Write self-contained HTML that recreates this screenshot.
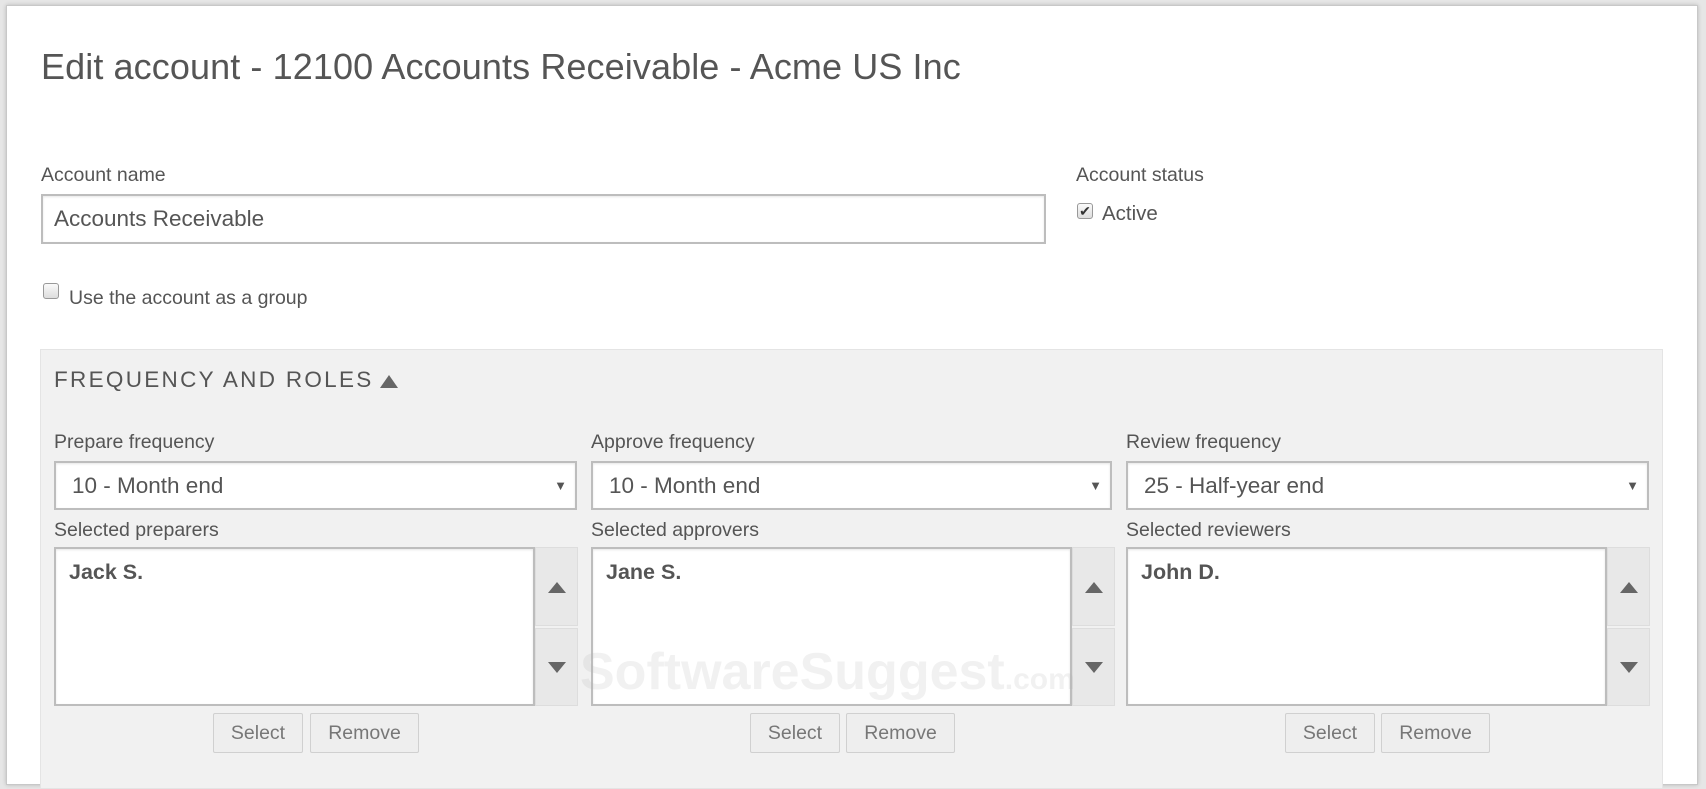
<!DOCTYPE html>
<html><head><meta charset="utf-8"><style>
*{box-sizing:border-box;margin:0;padding:0}
body{width:1706px;height:770px;overflow:hidden;background:#e6e6e6;font-family:"Liberation Sans",Arial,sans-serif;color:#555;position:relative}
.page{position:absolute;left:6px;top:5px;width:1692px;height:780px;background:#fff;border:1px solid #c8c8c8;box-shadow:0 0 4px rgba(0,0,0,.2)}
.a{position:absolute}
h1{position:absolute;left:41px;top:46px;font-size:36px;font-weight:normal;color:#555;letter-spacing:0.1px}
.lbl{font-size:19.5px;color:#555}
.inp{border:2px solid #bdbdbd;background:#fff;box-shadow:inset 0 1px 2px rgba(0,0,0,.1)}
.cb{width:16px;height:16px;border:1px solid #999;border-radius:3px;background:linear-gradient(#fafafa,#ddd)}
.panel{position:absolute;left:40px;top:349px;width:1623px;height:440px;background:#f1f1f1;border:1px solid #e4e4e4}
.sel{font-size:22.5px;color:#555;padding-left:16px;line-height:45px}
.arr{position:absolute;right:8px;top:0;font-size:13px;line-height:45px;color:#555}
.btn{position:absolute;top:0;height:40px;border:1px solid #d0d0d0;background:#eee;color:#777;font-size:19.5px;line-height:38px;text-align:center;border-radius:2px}
.tri-u{width:0;height:0;border-left:9px solid transparent;border-right:9px solid transparent;border-bottom:11px solid #666}
.tri-d{width:0;height:0;border-left:9px solid transparent;border-right:9px solid transparent;border-top:11px solid #666}
</style></head><body>
<div class="page"></div>
<h1>Edit account - 12100 Accounts Receivable - Acme US Inc</h1>
<div class="a lbl" style="left:41px;top:164px">Account name</div>
<div class="a inp" style="left:41px;top:194px;width:1005px;height:50px;font-size:22.5px;line-height:46px;padding-left:11px">Accounts Receivable</div>
<div class="a lbl" style="left:1076px;top:164px">Account status</div>
<div class="a cb" style="left:1077px;top:203px;font-size:14px;line-height:14px;text-align:center;color:#333">✔</div>
<div class="a lbl" style="left:1102px;top:202px;font-size:20.5px">Active</div>
<div class="a cb" style="left:43px;top:283px"></div>
<div class="a lbl" style="left:69px;top:287px">Use the account as a group</div>
<div class="panel"></div>
<div class="a" style="left:54px;top:367px;font-size:22.5px;letter-spacing:2.3px;color:#555">FREQUENCY AND ROLES</div>
<div class="a tri-u" style="left:380px;top:375px;border-bottom-width:13px"></div>

<div class="a" style="left:54px;top:0">
 <div class="a lbl" style="left:0;top:431px;white-space:nowrap">Prepare frequency</div>
 <div class="a inp sel" style="left:0;top:461px;width:523px;height:49px">10 - Month end<span class="arr">▼</span></div>
 <div class="a lbl" style="left:0;top:519px;white-space:nowrap">Selected preparers</div>
 <div class="a inp" style="left:0;top:547px;width:481px;height:159px;font-weight:bold;font-size:21.5px;padding:11px 0 0 13px">Jack S.</div>
 <div class="a" style="left:481px;top:547px;width:43px;height:79px;background:#e8e8e8;border:1px solid #ddd"><div class="tri-u" style="margin:34px auto 0"></div></div>
 <div class="a" style="left:481px;top:628px;width:43px;height:78px;background:#e8e8e8;border:1px solid #ddd"><div class="tri-d" style="margin:33px auto 0"></div></div>
 <div class="a" style="left:0;top:713px"><div class="btn" style="left:159px;width:90px">Select</div><div class="btn" style="left:256px;width:109px">Remove</div></div>
</div>

<div class="a" style="left:591px;top:0">
 <div class="a lbl" style="left:0;top:431px;white-space:nowrap">Approve frequency</div>
 <div class="a inp sel" style="left:0;top:461px;width:521px;height:49px">10 - Month end<span class="arr">▼</span></div>
 <div class="a lbl" style="left:0;top:519px;white-space:nowrap">Selected approvers</div>
 <div class="a inp" style="left:0;top:547px;width:481px;height:159px;font-weight:bold;font-size:21.5px;padding:11px 0 0 13px">Jane S.</div>
 <div class="a" style="left:481px;top:547px;width:43px;height:79px;background:#e8e8e8;border:1px solid #ddd"><div class="tri-u" style="margin:34px auto 0"></div></div>
 <div class="a" style="left:481px;top:628px;width:43px;height:78px;background:#e8e8e8;border:1px solid #ddd"><div class="tri-d" style="margin:33px auto 0"></div></div>
 <div class="a" style="left:0;top:713px"><div class="btn" style="left:159px;width:90px">Select</div><div class="btn" style="left:255px;width:109px">Remove</div></div>
</div>

<div class="a" style="left:1126px;top:0">
 <div class="a lbl" style="left:0;top:431px;white-space:nowrap">Review frequency</div>
 <div class="a inp sel" style="left:0;top:461px;width:523px;height:49px">25 - Half-year end<span class="arr">▼</span></div>
 <div class="a lbl" style="left:0;top:519px;white-space:nowrap">Selected reviewers</div>
 <div class="a inp" style="left:0;top:547px;width:481px;height:159px;font-weight:bold;font-size:21.5px;padding:11px 0 0 13px">John D.</div>
 <div class="a" style="left:481px;top:547px;width:43px;height:79px;background:#e8e8e8;border:1px solid #ddd"><div class="tri-u" style="margin:34px auto 0"></div></div>
 <div class="a" style="left:481px;top:628px;width:43px;height:78px;background:#e8e8e8;border:1px solid #ddd"><div class="tri-d" style="margin:33px auto 0"></div></div>
 <div class="a" style="left:0;top:713px"><div class="btn" style="left:159px;width:90px">Select</div><div class="btn" style="left:255px;width:109px">Remove</div></div>
</div>

<div class="a" style="left:580px;top:642px;font-size:52px;font-weight:bold;color:rgba(180,180,180,.18);white-space:nowrap">SoftwareSuggest<span style="font-size:30px">.com</span></div>
</body></html>
